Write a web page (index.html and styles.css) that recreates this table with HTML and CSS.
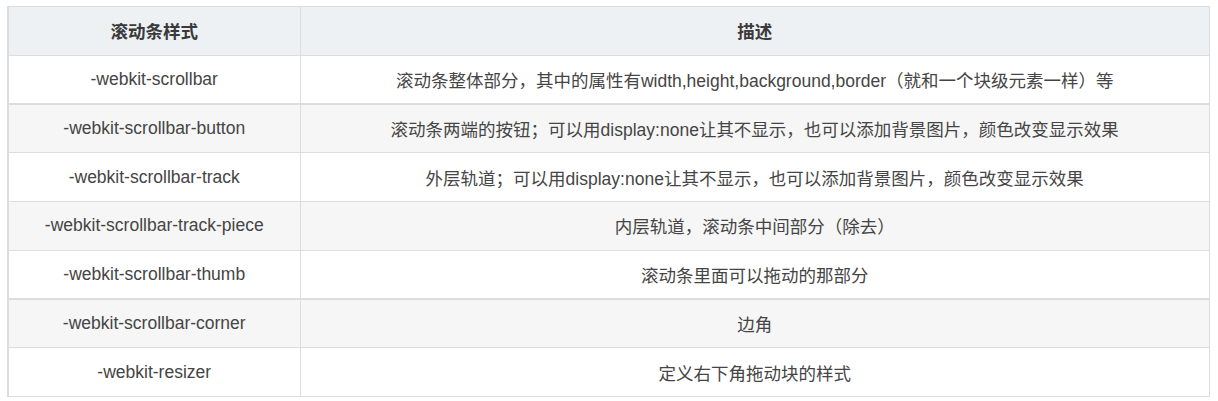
FILE: index.html
```html
<!DOCTYPE html>
<html lang="zh-CN">
<head>
<meta charset="utf-8">
<title>滚动条样式</title>
<link rel="stylesheet" href="styles.css">
</head>
<body>
<div class="page">
  <table class="tbl">
    <colgroup><col class="c1"><col class="c2"></colgroup>
    <thead>
      <tr><th>滚动条样式</th><th>描述</th></tr>
    </thead>
    <tbody>
      <tr class="thick"><td>-webkit-scrollbar</td><td>滚动条整体部分，其中的属性有width,height,background,border（就和一个块级元素一样）等</td></tr>
      <tr class="alt"><td>-webkit-scrollbar-button</td><td>滚动条两端的按钮；可以用display:none让其不显示，也可以添加背景图片，颜色改变显示效果</td></tr>
      <tr><td>-webkit-scrollbar-track</td><td>外层轨道；可以用display:none让其不显示，也可以添加背景图片，颜色改变显示效果</td></tr>
      <tr class="alt"><td>-webkit-scrollbar-track-piece</td><td>内层轨道，滚动条中间部分（除去）</td></tr>
      <tr class="thick"><td>-webkit-scrollbar-thumb</td><td>滚动条里面可以拖动的那部分</td></tr>
      <tr class="alt"><td>-webkit-scrollbar-corner</td><td>边角</td></tr>
      <tr><td>-webkit-resizer</td><td>定义右下角拖动块的样式</td></tr>
    </tbody>
  </table>
</div>
</body>
</html>
```
FILE: styles.css
```css
html, body {
  margin: 0;
  padding: 0;
  background: #ffffff;
}
.page {
  padding: 6px 0 0 7px;
}
.tbl {
  width: 1203px;
  border-collapse: collapse;
  table-layout: fixed;
  font-family: "Liberation Sans", Arial, "Noto Sans CJK SC", sans-serif;
  font-size: 17.5px;
  color: #454545;
  border-left: 2px solid #dcdcdc;
}
.c1 { width: 292px; }
.tbl th,
.tbl td {
  border: 1px solid #dddddd;
  text-align: center;
  vertical-align: middle;
  padding: 0 10px;
  height: 48.75px;
  box-sizing: border-box;
  white-space: nowrap;
}
.tbl th {
  background: #eef1f4;
  font-weight: bold;
  color: #3a3a3a;
}
.tbl tr.alt td {
  background: #f6f6f6;
}
.tbl tr.thick td {
  border-bottom: 2px solid #dddddd;
}
```
